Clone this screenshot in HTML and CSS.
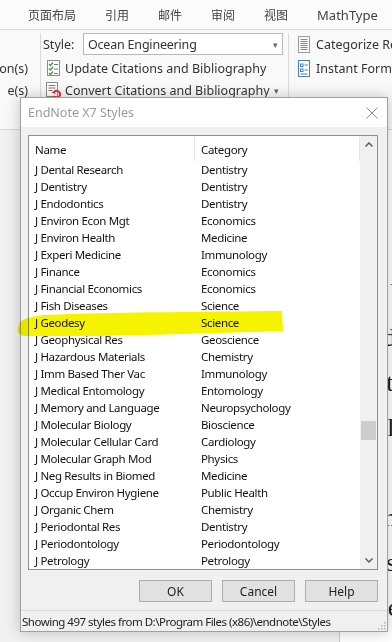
FILE: index.html
```html
<!DOCTYPE html>
<html lang="zh-CN">
<head>
<meta charset="UTF-8">
<title>EndNote X7 Styles</title>
<link rel="stylesheet" href="styles.css">
</head>
<body>

<div class="tabs">
    <span>页面布局</span>
    <span>引用</span>
    <span>邮件</span>
    <span>审阅</span>
    <span>视图</span>
    <span class="latin">MathType</span>
</div>

<div class="ribbon">
    <div class="group group-left">
        <div class="rb-row first"></div>
        <div class="rb-row">on(s)</div>
        <div class="rb-row">e(s)</div>
    </div>
    <div class="group group-mid">
        <div class="rb-row first">
            <span class="style-label">Style:</span>
            <div class="combo"><span>Ocean Engineering</span><span class="caret">&#9662;</span></div>
        </div>
        <div class="rb-row">
            <svg class="icon" width="15" height="16" viewBox="0 0 15 16">
                <rect x="1.5" y="0.5" width="12" height="15" fill="#fff" stroke="#8c8c8c"/>
                <path d="M3 4l1.5 1.5L7 2.5M3 8.5l1.5 1.5L7 7M3 13l1.5 1.5L7 11.5" stroke="#3d9b3d" stroke-width="1.3" fill="none"/>
                <path d="M8 4.5h4M8 9h4M8 13.5h4" stroke="#7a7a7a"/>
            </svg>
            <span>Update Citations and Bibliography</span>
        </div>
        <div class="rb-row">
            <svg class="icon" width="15" height="16" viewBox="0 0 15 16">
                <rect x="0.5" y="0.5" width="11" height="14" fill="#fff" stroke="#8c8c8c"/>
                <path d="M2.5 3.5h7M2.5 6h7M2.5 8.5h4" stroke="#7a7a7a"/>
                <path d="M8.5 9.5a3.5 3.5 0 1 1 -1 4.5" stroke="#d33" stroke-width="2" fill="none"/>
                <path d="M5.5 10.5l3.5 -2l0.5 3.5z" fill="#d33"/>
            </svg>
            <span>Convert Citations and Bibliography</span><span class="caret small">&#9662;</span>
        </div>
    </div>
    <div class="group group-right">
        <div class="rb-row first">
            <svg class="icon" width="14" height="17" viewBox="0 0 14 17">
                <rect x="1.5" y="0.5" width="11" height="16" fill="#fafafa" stroke="#9a9a9a"/>
                <path d="M3.5 3.5h7M3.5 5.5h7M3.5 7.5h7M3.5 9.5h7M3.5 11.5h7M3.5 13.5h7" stroke="#888"/>
            </svg>
            <span>Categorize References</span>
        </div>
        <div class="rb-row">
            <svg class="icon" width="14" height="17" viewBox="0 0 14 17">
                <rect x="1.5" y="0.5" width="11" height="16" fill="#fff" stroke="#4a7fc1"/>
                <rect x="3.5" y="4" width="2.5" height="2.5" fill="none" stroke="#4a7fc1"/>
                <rect x="3.5" y="9" width="2.5" height="2.5" fill="none" stroke="#4a7fc1"/>
                <path d="M7.5 5h3.5M7.5 10h3.5M3.5 14h7" stroke="#4a7fc1"/>
            </svg>
            <span>Instant Formatting</span>
        </div>
    </div>
</div>

<div class="doc">
    <div class="page">
        <p>can be</p>
        <p>used for</p>
        <p>the test</p>
        <p>by the</p>
        <p>E = mc</p>
        <p>In this</p>
        <p>a result</p>
        <p>by leaching</p>
    </div>
</div>

<div class="dialog">
    <div class="titlebar">
        <span class="title">EndNote X7 Styles</span>
        <svg class="close" width="12" height="12" viewBox="0 0 12 12">
            <path d="M0.5 0.5L11.5 11.5M11.5 0.5L0.5 11.5" stroke="#8a8a8a" stroke-width="1"/>
        </svg>
    </div>

    <div class="listbox">
        <div class="list-main">
            <div class="list-head">
                <div class="col-name">Name</div>
                <div class="col-cat">Category</div>
            </div>
            <div class="rows">
                <div class="row"><div class="col-name">J Dental Research</div><div class="col-cat">Dentistry</div></div>
                <div class="row"><div class="col-name">J Dentistry</div><div class="col-cat">Dentistry</div></div>
                <div class="row"><div class="col-name">J Endodontics</div><div class="col-cat">Dentistry</div></div>
                <div class="row"><div class="col-name">J Environ Econ Mgt</div><div class="col-cat">Economics</div></div>
                <div class="row"><div class="col-name">J Environ Health</div><div class="col-cat">Medicine</div></div>
                <div class="row"><div class="col-name">J Experi Medicine</div><div class="col-cat">Immunology</div></div>
                <div class="row"><div class="col-name">J Finance</div><div class="col-cat">Economics</div></div>
                <div class="row"><div class="col-name">J Financial Economics</div><div class="col-cat">Economics</div></div>
                <div class="row"><div class="col-name">J Fish Diseases</div><div class="col-cat">Science</div></div>
                <div class="row"><div class="col-name">J Geodesy</div><div class="col-cat">Science</div></div>
                <div class="row"><div class="col-name">J Geophysical Res</div><div class="col-cat">Geoscience</div></div>
                <div class="row"><div class="col-name">J Hazardous Materials</div><div class="col-cat">Chemistry</div></div>
                <div class="row"><div class="col-name">J Imm Based Ther Vac</div><div class="col-cat">Immunology</div></div>
                <div class="row"><div class="col-name">J Medical Entomology</div><div class="col-cat">Entomology</div></div>
                <div class="row"><div class="col-name">J Memory and Language</div><div class="col-cat">Neuropsychology</div></div>
                <div class="row"><div class="col-name">J Molecular Biology</div><div class="col-cat">Bioscience</div></div>
                <div class="row"><div class="col-name">J Molecular Cellular Card</div><div class="col-cat">Cardiology</div></div>
                <div class="row"><div class="col-name">J Molecular Graph Mod</div><div class="col-cat">Physics</div></div>
                <div class="row"><div class="col-name">J Neg Results in Biomed</div><div class="col-cat">Medicine</div></div>
                <div class="row"><div class="col-name">J Occup Environ Hygiene</div><div class="col-cat">Public Health</div></div>
                <div class="row"><div class="col-name">J Organic Chem</div><div class="col-cat">Chemistry</div></div>
                <div class="row"><div class="col-name">J Periodontal Res</div><div class="col-cat">Dentistry</div></div>
                <div class="row"><div class="col-name">J Periodontology</div><div class="col-cat">Periodontology</div></div>
                <div class="row"><div class="col-name">J Petrology</div><div class="col-cat">Petrology</div></div>
            </div>
        </div>
        <div class="scrollbar">
            <div class="sb-btn">
                <svg width="8" height="5" viewBox="0 0 8 5"><path d="M0.5 4.5L4 1L7.5 4.5" stroke="#555" stroke-width="1.4" fill="none"/></svg>
            </div>
            <div class="sb-track"><div class="sb-thumb"></div></div>
            <div class="sb-btn">
                <svg width="8" height="5" viewBox="0 0 8 5"><path d="M0.5 0.5L4 4L7.5 0.5" stroke="#555" stroke-width="1.4" fill="none"/></svg>
            </div>
        </div>
    </div>

    <div class="buttons">
        <button>OK</button>
        <button>Cancel</button>
        <button>Help</button>
    </div>

    <div class="status">
        <span>Showing 497 styles from D:\Program Files (x86)\endnote\Styles</span>
        <svg class="grip" width="9" height="9" viewBox="0 0 9 9">
            <rect x="7" y="1" width="1.5" height="1.5" fill="#b5b5b5"/>
            <rect x="4" y="4" width="1.5" height="1.5" fill="#b5b5b5"/>
            <rect x="7" y="4" width="1.5" height="1.5" fill="#b5b5b5"/>
            <rect x="1" y="7" width="1.5" height="1.5" fill="#b5b5b5"/>
            <rect x="4" y="7" width="1.5" height="1.5" fill="#b5b5b5"/>
            <rect x="7" y="7" width="1.5" height="1.5" fill="#b5b5b5"/>
        </svg>
    </div>
</div>

<svg class="marker" width="272" height="32" viewBox="0 0 272 32">
    <path d="M4 14 C10 10 18 8 28 7 C70 5 140 4 266 3 L267 23 C200 25 140 27 84 28 L8 28 C3 27 1 24 2 20 Z" fill="#f6f300"/>
</svg>

</body>
</html>
```

FILE: styles.css
```css
* {
    box-sizing: border-box;
}
body {
    margin: 0;
    width: 392px;
    height: 642px;
    overflow: hidden;
    position: relative;
    background: #f1f1f1;
    font-family: "Noto Sans", "Liberation Sans", sans-serif;
    color: #222;
}

/* word ribbon behind the dialog */
.tabs {
    height: 30px;
    display: flex;
    align-items: center;
    gap: 29px;
    padding-left: 28px;
    background: #fbfbfb;
    border-bottom: 1px solid #dcdcdc;
    font-family: "Noto Sans CJK SC", sans-serif;
    font-size: 12px;
    color: #444;
}
.tabs .latin {
    font-family: "Noto Sans", sans-serif;
    font-size: 13px;
}
.ribbon {
    height: 100px;
    display: flex;
    padding-top: 3px;
    background: #f9f9f9;
    border-bottom: 1px solid #d4d4d4;
    font-size: 12.5px;
    color: #333;
}
.group {
    height: 100%;
    border-right: 1px solid #dadada;
}
.rb-row {
    height: 22px;
    display: flex;
    align-items: center;
    white-space: nowrap;
}
.rb-row.first {
    margin-bottom: 2px;
}
.group-left {
    width: 41px;
    overflow: hidden;
}
.group-left .rb-row {
    justify-content: flex-end;
    padding-right: 12px;
}
.group-mid {
    width: 248px;
    padding-left: 2px;
}
.group-mid .rb-row {
    padding-left: 3px;
}
.group-mid .rb-row.first {
    padding-left: 0;
}
.style-label {
    width: 40px;
}
.combo {
    width: 200px;
    height: 22px;
    display: flex;
    align-items: center;
    justify-content: space-between;
    padding: 0 4px;
    background: #fff;
    border: 1px solid #b9b9b9;
    letter-spacing: -0.2px;
}
.caret {
    font-size: 9px;
    color: #666;
}
.caret.small {
    margin-left: 4px;
}
.icon {
    margin-right: 4px;
    flex: none;
}
.group-right {
    flex: 1;
    border-right: none;
    padding-left: 8px;
    overflow: hidden;
}
.group-right .icon {
    margin-right: 5px;
}

.doc {
    height: 512px;
    position: relative;
}
.page {
    margin-left: 339px;
    height: 100%;
    padding: 140px 0 0 8px;
    background: #fff;
    border-left: 1px solid #c9c9c9;
    font-family: "Liberation Serif", serif;
    font-size: 26px;
    color: #222;
    white-space: nowrap;
    overflow: hidden;
}
.page p {
    margin: 0;
    line-height: 45px;
}

/* endnote dialog */
.dialog {
    position: absolute;
    left: 20px;
    top: 97px;
    width: 368px;
    height: 535px;
    display: flex;
    flex-direction: column;
    background: #f0f0f0;
    border: 1px solid #a0a0a0;
    box-shadow: 0 0 14px rgba(0, 0, 0, 0.22);
}
.titlebar {
    height: 29px;
    flex: none;
    display: flex;
    align-items: center;
    justify-content: space-between;
    padding: 0 9px 0 7px;
    background: #fff;
}
.title {
    font-size: 12.5px;
    color: #9a9a9a;
}
.listbox {
    width: 350px;
    height: 435px;
    flex: none;
    margin: 8px 0 0 7px;
    display: flex;
    background: #fff;
    border: 1px solid #8e8f94;
}
.list-main {
    width: 331px;
    font-size: 11.5px;
    letter-spacing: -0.35px;
    color: #111;
}
.list-head {
    height: 25px;
    display: flex;
    align-items: stretch;
}
.list-head div {
    display: flex;
    align-items: center;
    border-right: 1px solid #e5e5e5;
    margin: 1px 0 0;
}
.col-name {
    width: 166px;
    padding-left: 6px;
    white-space: nowrap;
}
.col-cat {
    flex: 1;
    padding-left: 6px;
    white-space: nowrap;
}
.rows {
    height: 408px;
    overflow: hidden;
}
.row {
    height: 17px;
    display: flex;
    align-items: center;
}
.scrollbar {
    width: 17px;
    display: flex;
    flex-direction: column;
    background: #f0f0f0;
}
.sb-btn {
    height: 17px;
    display: flex;
    align-items: center;
    justify-content: center;
}
.sb-track {
    flex: 1;
}
.sb-thumb {
    height: 19px;
    margin: 268px 1px 0;
    background: #cdcdcd;
}
.buttons {
    height: 22px;
    flex: none;
    margin-top: 10px;
    display: flex;
    justify-content: flex-end;
    gap: 10px;
    padding-right: 9px;
}
.buttons button {
    width: 73px;
    height: 22px;
    padding: 0;
    font-family: inherit;
    font-size: 12px;
    color: #222;
    background: #e1e1e1;
    border: 1px solid #adadad;
}
.status {
    height: 21px;
    flex: none;
    margin-top: 8px;
    display: flex;
    align-items: center;
    justify-content: space-between;
    padding: 0 1px 0 1px;
    border-top: 1px solid #d9d9d9;
    font-size: 11.5px;
    letter-spacing: -0.5px;
    color: #222;
}
.grip {
    align-self: flex-end;
    margin-bottom: 1px;
}

/* yellow highlighter stroke on the screenshot */
.marker {
    position: absolute;
    left: 16px;
    top: 308px;
    mix-blend-mode: multiply;
    pointer-events: none;
}
```
